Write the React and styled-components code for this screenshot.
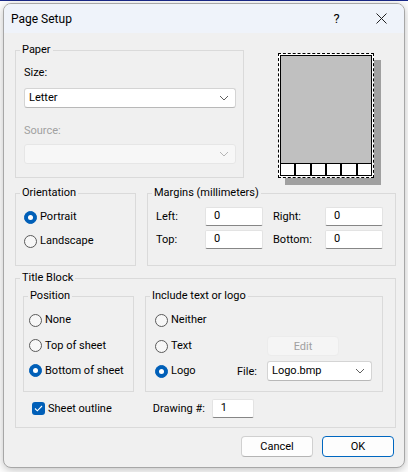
import React from "react";
import styled, { createGlobalStyle } from "styled-components";

const GlobalStyle = createGlobalStyle`
  html, body {
    margin: 0;
    padding: 0;
    background: #ffffff;
  }
  body {
    font-family: Roboto, "Noto Sans", sans-serif;
    font-size: 11px;
    color: #000;
  }
  * { box-sizing: border-box; }
`;

const Desk = styled.div`
  width: 408px;
  height: 472px;
  padding: 3px 0 0 3px;
  background: linear-gradient(#1b2a8a, #1b2a8a) 0 0 / 100% 1px no-repeat, #ffffff;
`;

const Window = styled.div`
  width: 402px;
  height: 465px;
  background: #f0f0f0;
  border: 1px solid #a7a7a7;
  border-radius: 8px;
  overflow: hidden;
  box-shadow: 0 2px 10px rgba(0, 0, 0, 0.25);
  display: flex;
  flex-direction: column;
`;

const TitleBar = styled.div`
  height: 29px;
  flex: none;
  background: #eff3fa;
  display: flex;
  align-items: center;
  padding-left: 7px;
  font-size: 12px;
`;

const Title = styled.span`
  flex: 1;
`;

const TitleButton = styled.span`
  width: 45px;
  display: flex;
  justify-content: center;
  align-items: center;
  font-size: 13px;
`;

const Body = styled.div`
  padding: 10px 0 0 11px;
  display: flex;
  flex-direction: column;
`;

const Row = styled.div`
  display: flex;
  align-items: flex-start;
  margin-top: ${(p) => p.$mt || 0}px;
`;

// legend text sits 7px in from the group's left border, whatever the padding
const Group = styled.fieldset`
  margin: 0;
  margin-left: ${(p) => p.$ml || 0}px;
  min-width: 0;
  width: ${(p) => p.$w}px;
  height: ${(p) => p.$h}px;
  border: 1px solid #dadada;
  padding: 0 ${(p) => p.$px ?? 8}px;
  display: flex;
  flex-direction: column;

  & > legend {
    margin-left: ${(p) => 4 - (p.$px ?? 8)}px;
  }
`;

const Legend = styled.legend`
  padding: 0 2px;
  line-height: 14px;
  font-size: 11px;
`;

const Label = styled.div`
  line-height: 16px;
  margin-top: ${(p) => p.$mt || 0}px;
  margin-left: ${(p) => p.$ml || 0}px;
  color: ${(p) => (p.$disabled ? "#a0a0a0" : "#000")};
`;

const Select = styled.div`
  width: ${(p) => p.$w}px;
  height: 20px;
  margin-top: ${(p) => p.$mt || 0}px;
  background: ${(p) => (p.$disabled ? "#f7f7f7" : "#ffffff")};
  border: 1px solid ${(p) => (p.$disabled ? "#e6e6e6" : "#d4d4d4")};
  border-bottom-color: ${(p) => (p.$disabled ? "#e6e6e6" : "#b8b8b8")};
  border-radius: 3px;
  display: flex;
  align-items: center;
  padding: 0 6px 0 4px;
  color: #000;
  span { flex: 1; line-height: 16px; }
`;

const TextBox = styled.div`
  width: ${(p) => p.$w}px;
  height: 19px;
  margin-left: ${(p) => p.$ml || 0}px;
  background: #fff;
  border: 1px solid #e3e3e3;
  border-bottom: 1px solid #868686;
  border-radius: 2px;
  padding-left: 8px;
  line-height: 16px;
`;

const Chevron = ({ color = "#5f5f5f" }) => (
  <svg width="10" height="6" viewBox="0 0 10 6">
    <polyline points="1,1 5,5 9,1" fill="none" stroke={color} strokeWidth="1" />
  </svg>
);

const Preview = styled.div`
  margin-left: 34px;
  margin-top: 10px;
  width: 96px;
  height: 125px;
  background: #ffffff;
  border: 1px dashed #000;
  box-shadow: 7px 7px 0 #a0a0a0;
  padding: 1px;
  display: flex;
`;

const Sheet = styled.div`
  flex: 1;
  border: 1px solid #000;
  display: flex;
  flex-direction: column;
`;

const SheetArea = styled.div`
  flex: 1;
  background: #c0c0c0;
  border-bottom: 1px solid #000;
`;

const SheetStrip = styled.div`
  height: 11px;
  display: grid;
  grid-template-columns: repeat(6, 1fr);
  background: #000;
  gap: 2px;
`;

const StripCell = styled.div`
  background: #fff;
`;

const Option = styled.label`
  display: flex;
  align-items: center;
  gap: 3px;
  line-height: 16px;
  height: ${(p) => p.$h || 24}px;
  margin-left: ${(p) => p.$ml || 0}px;
`;

const RadioDot = styled.span`
  width: 13px;
  height: 13px;
  border-radius: 50%;
  flex: none;
  border: 1px solid ${(p) => (p.$on ? "#005fb8" : "#5a5a5a")};
  background: ${(p) => (p.$on ? "#005fb8" : "#f7f7f7")};
  display: flex;
  align-items: center;
  justify-content: center;
  &::after {
    content: "";
    display: ${(p) => (p.$on ? "block" : "none")};
    width: 5px;
    height: 5px;
    border-radius: 50%;
    background: #fff;
  }
`;

const Radio = ({ on, children, h, ml }) => (
  <Option $h={h} $ml={ml}>
    <RadioDot $on={on} />
    {children}
  </Option>
);

const RadioList = styled.div`
  display: flex;
  flex-direction: column;
  padding-top: ${(p) => p.$pt || 0}px;
`;

const CheckBox = styled.span`
  width: 13px;
  height: 13px;
  border-radius: 3px;
  background: #005fb8;
  display: flex;
  align-items: center;
  justify-content: center;
  flex: none;
`;

const MarginGrid = styled.div`
  display: grid;
  grid-template-columns: 49px 58px 10px 52px 58px;
  grid-auto-rows: 19px;
  row-gap: 4px;
  align-items: center;
  margin-top: 7px;
`;

const IncludeGrid = styled.div`
  display: grid;
  grid-template-columns: 82px 30px 105px;
  grid-template-rows: 26px 26px 24px;
  align-items: center;
  margin-top: 4px;
`;

const Button = styled.div`
  width: ${(p) => p.$w || 72}px;
  height: ${(p) => p.$h || 21}px;
  background: ${(p) => (p.$disabled ? "#f5f5f5" : "#fdfdfd")};
  border: 1px solid ${(p) => (p.$primary ? "#0067c0" : p.$disabled ? "#ececec" : "#d0d0d0")};
  border-bottom-color: ${(p) => (p.$primary ? "#0067c0" : p.$disabled ? "#ececec" : "#b4b4b4")};
  border-radius: 4px;
  display: flex;
  align-items: center;
  justify-content: center;
  color: ${(p) => (p.$disabled ? "#a0a0a0" : "#000")};
`;

const BottomRow = styled.div`
  display: flex;
  align-items: center;
  margin-top: 7px;
  height: 19px;
`;

const Footer = styled.div`
  display: flex;
  justify-content: flex-end;
  gap: 9px;
  padding-right: 10px;
  margin-top: 8px;
`;

export default function App() {
  return (
    <Desk>
      <GlobalStyle />
      <Window>
        <TitleBar>
          <Title>Page Setup</Title>
          <TitleButton>?</TitleButton>
          <TitleButton>
            <svg width="11" height="11" viewBox="0 0 11 11">
              <path d="M0.5 0.5 L10.5 10.5 M10.5 0.5 L0.5 10.5" stroke="#222" strokeWidth="1" />
            </svg>
          </TitleButton>
        </TitleBar>
        <Body>
          <Row>
            <Group $w={229} $h={135}>
              <Legend>Paper</Legend>
              <Label $mt={8}>Size:</Label>
              <Select $w={212} $mt={7}>
                <span>Letter</span>
                <Chevron />
              </Select>
              <Label $mt={15} $disabled>Source:</Label>
              <Select $w={212} $mt={5} $disabled>
                <span />
                <Chevron color="#b5b5b5" />
              </Select>
            </Group>
            <Preview>
              <Sheet>
                <SheetArea />
                <SheetStrip>
                  {[0, 1, 2, 3, 4, 5].map((i) => (
                    <StripCell key={i} />
                  ))}
                </SheetStrip>
              </Sheet>
            </Preview>
          </Row>

          <Row $mt={8}>
            <Group $w={121} $h={80}>
              <Legend>Orientation</Legend>
              <RadioList $pt={5}>
                <Radio on h={24}>Portrait</Radio>
                <Radio h={24}>Landscape</Radio>
              </RadioList>
            </Group>
            <Group $w={249} $h={80} $ml={11}>
              <Legend>Margins (millimeters)</Legend>
              <MarginGrid>
                <span>Left:</span>
                <TextBox $w={58}>0</TextBox>
                <span />
                <span>Right:</span>
                <TextBox $w={58}>0</TextBox>
                <span>Top:</span>
                <TextBox $w={58}>0</TextBox>
                <span />
                <span>Bottom:</span>
                <TextBox $w={58}>0</TextBox>
              </MarginGrid>
            </Group>
          </Row>

          <Row $mt={5}>
            <Group $w={381} $h={157} $px={7}>
              <Legend>Title Block</Legend>
              <Row $mt={4}>
                <Group $w={111} $h={103} $px={5}>
                  <Legend>Position</Legend>
                  <RadioList $pt={4}>
                    <Radio h={26}>None</Radio>
                    <Radio h={25}>Top of sheet</Radio>
                    <Radio on h={25}>Bottom of sheet</Radio>
                  </RadioList>
                </Group>
                <Group $w={238} $h={103} $ml={11} $px={9}>
                  <Legend>Include text or logo</Legend>
                  <IncludeGrid>
                    <Radio h={26}>Neither</Radio>
                    <span />
                    <span />
                    <Radio h={26}>Text</Radio>
                    <span />
                    <Button $w={72} $h={20} $disabled>Edit</Button>
                    <Radio on h={24}>Logo</Radio>
                    <span>File:</span>
                    <Select $w={105}>
                      <span>Logo.bmp</span>
                      <Chevron />
                    </Select>
                  </IncludeGrid>
                </Group>
              </Row>
              <BottomRow>
                <Option $ml={9}>
                  <CheckBox>
                    <svg width="9" height="7" viewBox="0 0 9 7">
                      <polyline points="1,3.5 3.3,5.8 8,1" fill="none" stroke="#fff" strokeWidth="1.1" />
                    </svg>
                  </CheckBox>
                  Sheet outline
                </Option>
                <Label $ml={41}>Drawing #:</Label>
                <TextBox $w={42} $ml={7}>1</TextBox>
              </BottomRow>
            </Group>
          </Row>

          <Footer>
            <Button $w={72}>Cancel</Button>
            <Button $w={72} $primary>OK</Button>
          </Footer>
        </Body>
      </Window>
    </Desk>
  );
}
